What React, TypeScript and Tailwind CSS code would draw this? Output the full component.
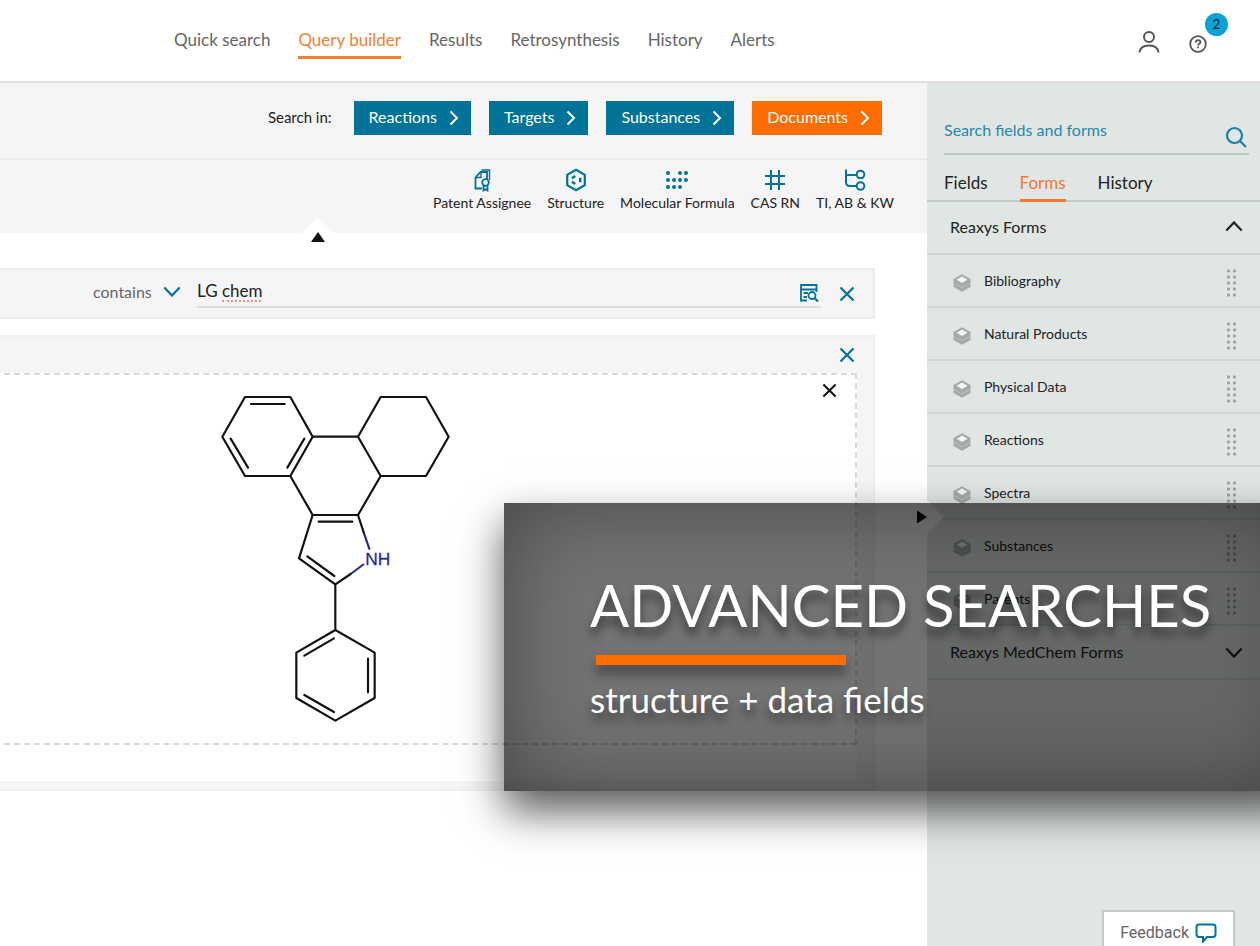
import type { ReactNode } from "react";

const navItems = ["Quick search", "Query builder", "Results", "Retrosynthesis", "History", "Alerts"];

const searchTargets = [
  { label: "Reactions", active: false },
  { label: "Targets", active: false },
  { label: "Substances", active: false },
  { label: "Documents", active: true },
];

const sideTabs = ["Fields", "Forms", "History"];

const forms = ["Bibliography", "Natural Products", "Physical Data", "Reactions", "Spectra", "Substances", "Patents"];

const formulaDots = [
  [3, 5], [15, 5], [21, 5],
  [3, 12], [9, 12], [15, 12], [21, 12],
  [3, 19], [9, 19], [15, 19],
];

function FieldIcon({ children }: { children: ReactNode }) {
  return (
    <svg viewBox="0 0 24 24" className="h-6 w-6" fill="none" stroke="currentColor" strokeWidth="2" aria-hidden="true">
      {children}
    </svg>
  );
}

const quickFields = [
  {
    label: "Patent Assignee",
    icon: (
      <FieldIcon>
        <path d="M12 20.500H5.500V9.500l5-5.500H17v7" strokeWidth="1.800" />
        <path d="M11 4.500v5H6" strokeWidth="1.400" />
        <path d="M11.500 2H19.500v10" strokeWidth="1.400" />
        <circle cx="15.500" cy="14.500" r="3.300" strokeWidth="1.800" />
        <path d="M13.500 17.500V22.500l2-1.200 2 1.200v-5" strokeWidth="1.800" />
      </FieldIcon>
    ),
  },
  {
    label: "Structure",
    icon: (
      <FieldIcon>
        <path d="M12 1.800l8.800 5.100v10.200L12 22.200l-8.800-5.100V6.900z" strokeWidth="2.200" />
        <path d="M8 10.300l3.200-2.200M8 13.700l3.200 2.200M16.200 9.800v4.400" strokeWidth="2.400" />
      </FieldIcon>
    ),
  },
  {
    label: "Molecular Formula",
    icon: (
      <FieldIcon>
        {formulaDots.map(([x, y]) => (
          <circle key={`${x}-${y}`} cx={x} cy={y} r="2" fill="currentColor" stroke="none" />
        ))}
      </FieldIcon>
    ),
  },
  {
    label: "CAS RN",
    icon: (
      <FieldIcon>
        <path d="M8 2v20M16 2v20M2 8h20M2 16h20" />
      </FieldIcon>
    ),
  },
  {
    label: "TI, AB & KW",
    icon: (
      <FieldIcon>
        <path d="M3 1.500V14q0 4 4 4h7M3 7h10" />
        <circle cx="17.500" cy="6.500" r="3.800" />
        <circle cx="17.500" cy="18" r="3.800" />
      </FieldIcon>
    ),
  },
];

function Close({ className }: { className: string }) {
  return (
    <svg viewBox="0 0 16 16" className={className} fill="none" stroke="currentColor" strokeWidth="2.200" aria-hidden="true">
      <path d="M1.500 1.500l13 13M14.500 1.500l-13 13" />
    </svg>
  );
}

function Chevron({ className }: { className: string }) {
  return (
    <svg viewBox="0 0 20 12" className={className} fill="none" stroke="currentColor" strokeWidth="2.400" aria-hidden="true">
      <path d="M1.500 1.500L10 10.500l8.500-9" />
    </svg>
  );
}

function Layers() {
  return (
    <svg viewBox="0 0 20 20" className="h-5 w-5" aria-hidden="true">
      <path d="M10 1.200l8.500 4.700v8.200L10 18.800l-8.500-4.700V5.900z" fill="#a3aaa8" />
      <path d="M10 3.600l5.500 3.200L10 10l-5.500-3.200z" fill="#f4f7f6" />
      <path d="M1.500 10.200L10 14.700l8.500-4.500" fill="none" stroke="#c3c9c7" strokeWidth="0.800" />
    </svg>
  );
}

function Grip() {
  return (
    <svg viewBox="0 0 10 28" className="h-7 w-[10px]" fill="#9aa19f" aria-hidden="true">
      {[2, 8, 14, 20, 26].map((y) => (
        <g key={y}>
          <rect x="0" y={y - 1.5} width="3" height="3" rx="1" />
          <rect x="6" y={y - 1.5} width="3" height="3" rx="1" />
        </g>
      ))}
    </svg>
  );
}

function Molecule() {
  return (
    <svg viewBox="0 0 930 1080" className="h-[360px] w-[310px]" role="img" aria-label="Query structure">
      <g fill="none" stroke="#111" strokeWidth="6.500" strokeLinejoin="round" strokeLinecap="round">
        <path d="M135 51H271L338 170L271 288H135L67 170Z" />
        <path d="M153 72H254M92 176L144 263M313 176L262 263" />
        <path d="M338 170H474L542 51H678L746 170L678 288H542L474 170" />
        <path d="M542 288L474 405H338L271 288" />
        <path d="M356 425H457" />
        <path d="M338 405L297 535L406 613L452 582M322 529L403 588" />
        <path d="M474 405L492 460" />
        <path d="M406 613V750L524 818V954L406 1022L289 954V818L406 750" />
        <path d="M402 775L313 827M504 836V937M402 996L313 945" />
      </g>
      <path d="M492 460L509 509M452 582L492 552" stroke="#2a2a9c" strokeWidth="6.500" />
      <text x="496" y="554" fontSize="52" fill="#2a2a9c" stroke="#2a2a9c" fontFamily="Liberation Sans, sans-serif">NH</text>
    </svg>
  );
}

function Header() {
  return (
    <header className="flex h-[83px] items-start justify-between border-b-2 border-[#dfdfdf] bg-white pl-[174px] pr-[32px]">
      <nav className="flex gap-7 pt-7">
        {navItems.map((item) => (
          <a
            key={item}
            href="#"
            className={
              item === "Query builder"
                ? "border-b-[3px] border-[#f58232] pb-1 text-[17px] leading-6 text-[#f58232]"
                : "pb-1 text-[17px] leading-6 text-[#666]"
            }
          >
            {item}
          </a>
        ))}
      </nav>
      <div className="flex gap-[27px] pt-[30px] text-[#555]">
        <button aria-label="Account">
          <svg viewBox="0 0 24 24" className="h-6 w-6" fill="none" stroke="currentColor" strokeWidth="2">
            <circle cx="12" cy="7" r="5" />
            <path d="M2.500 22.500C3 17.500 7 15.500 12 15.500s9 2 9.500 7" />
          </svg>
        </button>
        <button aria-label="Help" className="relative pr-5">
          <svg viewBox="0 0 20 20" className="mt-1 h-5 w-5" fill="none" stroke="currentColor" strokeWidth="1.800">
            <circle cx="10" cy="10" r="7.800" />
            <path d="M7.800 8.400c0-3 4.600-2.800 4.600-.2 0 1.600-2.300 1.500-2.300 3.300M10.100 12.600v1.700" strokeWidth="1.800" />
          </svg>
          <span className="absolute -top-[17px] right-0 flex h-[23px] w-[23px] items-center justify-center rounded-full bg-[#0aa3d5] text-[13px] text-[#123]">
            2
          </span>
        </button>
      </div>
    </header>
  );
}

function Builder() {
  return (
    <main className="relative min-w-0 flex-1">
      <div className="flex h-[77px] items-center justify-end gap-[18px] border-b-2 border-[#eaeaea] bg-[#f5f5f5] pb-[6px] pr-[45px]">
        <span className="mr-1 text-[15px] text-[#222]">Search in:</span>
        {searchTargets.map((target) => (
          <button
            key={target.label}
            className={
              target.active
                ? "flex h-[34px] items-center gap-3 bg-[#ff6c00] pl-[15px] pr-3 text-[16px] text-white"
                : "flex h-[34px] items-center gap-3 bg-[#007398] pl-[15px] pr-3 text-[16px] text-white"
            }
          >
            <span className="pb-[2px]">{target.label}</span>
            <svg viewBox="0 0 10 16" className="h-4 w-[10px]" fill="none" stroke="currentColor" strokeWidth="2" aria-hidden="true">
              <path d="M1.500 1.500L8 8l-6.500 6.500" />
            </svg>
          </button>
        ))}
      </div>

      <div className="relative flex h-[73px] justify-end gap-4 bg-[#f5f5f5] pr-[33px] pt-2">
        {quickFields.map((field) => (
          <button key={field.label} className="flex flex-col items-center text-[#007398]">
            {field.icon}
            <span className="mt-px text-[14px] leading-5 text-[#222]">{field.label}</span>
          </button>
        ))}
        <svg viewBox="0 0 32 26" className="absolute -bottom-[10px] left-[302px] h-[26px] w-8" aria-hidden="true">
          <path d="M0 16L16 0l16 16z" fill="#fff" />
          <path d="M9 25l7-10 7 10z" fill="#111" />
        </svg>
      </div>

      <div className="mr-[52px] pt-[35px]">
        <div className="flex h-[51px] items-center border-2 border-l-0 border-[#ebebeb] bg-[#f5f5f5] pr-[18px]">
          <label className="relative ml-[93px] flex w-[88px] items-center pb-1 text-[#666]">
            <select aria-label="Operator" className="w-full appearance-none bg-transparent text-[16px] leading-6 outline-none">
              <option>contains</option>
            </select>
            <Chevron className="pointer-events-none absolute right-0 h-[11px] w-[18px] text-[#007398]" />
          </label>
          <div className="relative ml-4 flex flex-1 items-start border-b-2 border-[#dcdcdc] pb-[3px]">
            <input
              aria-label="Patent assignee"
              defaultValue="LG chem"
              spellCheck={false}
              className="min-w-0 flex-1 bg-transparent text-[17px] leading-6 text-[#222] outline-none"
            />
            <span className="absolute left-[25px] top-[21px] w-[39px] border-b-2 border-dotted border-[#f0907a]" />
            <button aria-label="Look up values">
              <svg viewBox="0 0 20 20" className="mr-[2px] mt-1 h-5 w-5 text-[#007398]" fill="none" stroke="currentColor" strokeWidth="1.800">
                <path d="M8 17.500H2V2h15.500v7M2 6.500h15.500M4.500 10H9M4.500 14H8" />
                <circle cx="13" cy="12.500" r="3.500" />
                <path d="M15.500 15l3.500 3.500" strokeWidth="2.200" />
              </svg>
            </button>
          </div>
          <button aria-label="Remove field" className="ml-[18px] text-[#007398]">
            <Close className="h-4 w-4" />
          </button>
        </div>

        <section className="mt-4 border-2 border-l-0 border-[#f0f0f0] bg-[#f5f5f5] pb-2 pr-4">
          <div className="flex h-9 items-center justify-end pr-[2px]">
            <button aria-label="Remove structure" className="text-[#007398]">
              <Close className="h-4 w-4" />
            </button>
          </div>
          <div className="bg-white pb-9 pl-1">
            <div className="flex items-start justify-between border-2 border-l-0 border-dashed border-[#d9d9d9] pb-[3px] pl-[196px] pr-[18px] pt-[5px]">
              <Molecule />
              <button aria-label="Clear structure" className="mt-[3px] text-[#111]">
                <Close className="h-[15px] w-[15px]" />
              </button>
            </div>
          </div>
        </section>
      </div>
    </main>
  );
}

function FormsPanel() {
  return (
    <aside className="relative w-[333px] shrink-0 bg-[#e0e6e4] text-[#222]">
      <label className="ml-[17px] mr-[11px] flex h-[72px] items-end border-b-2 border-[#bfc7c5] pb-[5px]">
        <input
          aria-label="Search fields and forms"
          placeholder="Search fields and forms"
          className="mb-1 min-w-0 flex-1 bg-transparent text-[16px] leading-7 outline-none placeholder:text-[#2a86ab]"
        />
        <svg viewBox="0 0 22 22" className="mr-[2px] h-[22px] w-[22px] text-[#1c7ea4]" fill="none" stroke="currentColor" strokeWidth="2.200" aria-hidden="true">
          <circle cx="9.500" cy="9.500" r="7.500" />
          <path d="M15 15l6 6" />
        </svg>
      </label>
      <div className="flex gap-8 border-b-2 border-[#c3cbc9] pl-[17px] pt-4">
        {sideTabs.map((tab) => (
          <button
            key={tab}
            className={
              tab === "Forms"
                ? "-mb-[2px] border-b-[3px] border-[#f07a2c] pb-1 text-[17px] leading-6 text-[#f07a2c]"
                : "pb-[5px] text-[17px] leading-6"
            }
          >
            {tab}
          </button>
        ))}
      </div>
      <button className="flex h-[53px] w-full items-center justify-between border-b-2 border-[#cfd6d4] pb-[2px] pl-[23px] pr-[17px] text-[16px]">
        Reaxys Forms
        <Chevron className="h-[11px] w-[18px] rotate-180" />
      </button>
      <ul>
        {forms.map((form) => (
          <li key={form} className="flex h-[53px] items-center border-b-2 border-[#cfd6d4] pl-[25px] pr-[23px] pt-1 text-[14px]">
            <Layers />
            <span className="ml-3 flex-1 pb-1">{form}</span>
            <Grip />
          </li>
        ))}
      </ul>
      <button className="flex h-[54px] w-full items-center justify-between border-b-2 border-[#cfd6d4] pl-[23px] pr-[17px] text-[16px]">
        Reaxys MedChem Forms
        <Chevron className="h-[11px] w-[18px]" />
      </button>
      <svg viewBox="0 0 28 34" className="absolute -left-[10px] top-[417px] h-[34px] w-7" aria-hidden="true">
        <path d="M10 0l17 17-17 17z" fill="#fff" />
        <path d="M0 10.500l10 6.500-10 6.500z" fill="#111" />
      </svg>
      <button className="absolute bottom-0 right-[25px] flex h-[36px] items-center gap-[6px] border-2 border-b-0 border-[#c4caca] bg-white px-4 pt-2 font-['Roboto',sans-serif] text-[16px] text-[#666]">
        Feedback
        <svg viewBox="0 0 22 20" className="h-5 w-[22px] text-[#007398]" fill="none" stroke="currentColor" strokeWidth="2" aria-hidden="true">
          <path d="M4 1.500h14q2.500 0 2.500 2.500v7q0 3-2.500 3h-6l-4 4.500V14H4q-2.500 0-2.500-3V4q0-2.500 2.500-2.500z" />
        </svg>
      </button>
    </aside>
  );
}

function Banner() {
  return (
    <div className="absolute -right-10 left-[40%] top-[503px] h-72 bg-black/55 pl-[86px] pt-[64px] text-white shadow-[0_20px_40px_rgba(0,0,0,0.65),inset_0_0_90px_rgba(0,0,0,0.4)]">
      <h1 className="whitespace-nowrap text-[58px] leading-[76px] [text-shadow:0_8px_10px_rgba(0,0,0,0.5)]">ADVANCED SEARCHES</h1>
      <div className="ml-[6px] mt-3 h-[10px] w-[250px] bg-[#ff6c00] shadow-[0_8px_12px_rgba(0,0,0,0.45)]" />
      <p className="mt-[10px] text-[35px] leading-[48px] [text-shadow:0_8px_10px_rgba(0,0,0,0.5)]">structure + data fields</p>
    </div>
  );
}

export default function App() {
  return (
    <div className="relative flex min-h-screen flex-col overflow-hidden bg-white font-['Lato',sans-serif]">
      <Header />
      <div className="flex flex-1">
        <Builder />
        <FormsPanel />
      </div>
      <Banner />
    </div>
  );
}
